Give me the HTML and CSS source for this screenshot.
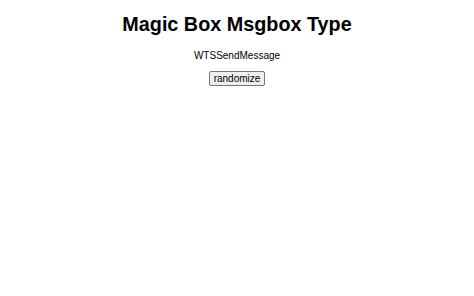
FILE: index.html
```html
<!DOCTYPE html>
<html lang="en">

<head>
  <meta charset="UTF-8">
  <title>Magic Box Msgbox Type</title>
  <link rel="stylesheet" href="styles.css">
</head>

<body>
  <div class="container">
    <h1>Magic Box Msgbox Type</h1>
    <p id="msgboxType">WTSSendMessage</p>
    <button id="randomBtn" class="random-btn">randomize</button>
  </div>
</body>

</html>
```

FILE: styles.css
```css
body {
  font-family: "Liberation Sans", Arial, sans-serif;
  margin: 0;
  padding: 0;
  background-color: #fff;
  color: #000;
}

.container {
  display: flex;
  flex-direction: column;
  align-items: center;
  padding-top: 12px;
}

h1 {
  font-size: 19.8px;
  margin: 0;
  line-height: 24px;
}

.container p {
  font-size: 10px;
  margin: 14px 0 9px;
  line-height: 12px;
}

.random-btn {
  font-family: "Liberation Sans", Arial, sans-serif;
  font-size: 10px;
  line-height: 11px;
  padding: 1px 4px;
  background-color: #efefef;
  border: 1px solid #767676;
  border-radius: 2px;
  color: #000;
}
```
